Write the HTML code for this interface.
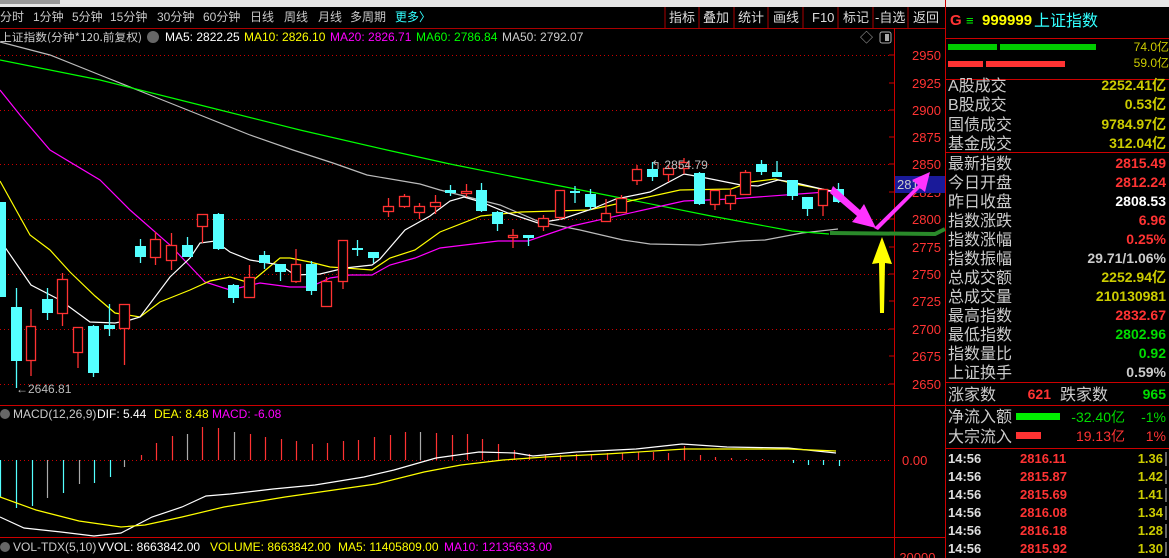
<!DOCTYPE html>
<html><head><meta charset="utf-8"><style>
html,body{margin:0;padding:0;background:#000;width:1169px;height:558px;overflow:hidden}
svg{display:block}
text{font-family:"Liberation Sans","Noto Sans CJK SC",sans-serif}
.cn{font-family:"Noto Sans CJK SC","WenQuanYi Zen Hei",sans-serif}
</style></head><body>
<svg id="s" width="1169" height="558" viewBox="0 0 1169 558" xmlns="http://www.w3.org/2000/svg">
<rect x="0" y="0" width="1169" height="7" fill="#e6e6e6"/>
<rect x="0" y="0" width="60" height="4" fill="#999"/>
<!-- menu -->
<g font-size="12" fill="#c8c8c8" class="cn">
<text x="0" y="21">分时</text><text x="33" y="21">1分钟</text><text x="72" y="21">5分钟</text><text x="110" y="21">15分钟</text><text x="157" y="21">30分钟</text><text x="203" y="21">60分钟</text><text x="250" y="21">日线</text><text x="284" y="21">周线</text><text x="318" y="21">月线</text><text x="350" y="21">多周期</text><text x="395" y="21" fill="#3ff">更多〉</text>
</g>
<line x1="0" y1="28.5" x2="945" y2="28.5" stroke="#a00" stroke-width="1"/>
<g stroke="#a00"><line x1="665" y1="7" x2="665" y2="28"/><line x1="699" y1="7" x2="699" y2="28"/><line x1="734" y1="7" x2="734" y2="28"/><line x1="768" y1="7" x2="768" y2="28"/><line x1="803" y1="7" x2="803" y2="28"/><line x1="838" y1="7" x2="838" y2="28"/><line x1="873" y1="7" x2="873" y2="28"/><line x1="908" y1="7" x2="908" y2="28"/></g>
<g font-size="13" fill="#ddd" class="cn">
<text x="669" y="22">指标</text><text x="703" y="22">叠加</text><text x="738" y="22">统计</text><text x="773" y="22">画线</text><text x="812" y="22" font-family="Liberation Sans">F10</text><text x="843" y="22">标记</text><text x="875" y="22">-自选</text><text x="913" y="22">返回</text>
</g>
<!-- header row -->
<g font-size="12">
<text x="0" y="41" fill="#ccc" class="cn" font-size="11" textLength="142" lengthAdjust="spacingAndGlyphs">上证指数(分钟*120.前复权)</text>
<circle cx="153" cy="37" r="6" fill="#666"/>
<text x="165" y="41" fill="#fff">MA5: 2822.25</text>
<text x="244" y="41" fill="#ff0">MA10: 2826.10</text>
<text x="330" y="41" fill="#f0f">MA20: 2826.71</text>
<text x="416" y="41" fill="#0f0">MA60: 2786.84</text>
<text x="502" y="41" fill="#ccc">MA50: 2792.07</text>
</g>
<text x="860" y="42" font-size="13" fill="#aaa">◇</text>
<rect x="880" y="32" width="11" height="11" rx="2" fill="none" stroke="#aaa"/><rect x="885" y="34" width="4" height="7" fill="#aaa"/>
<!-- grid -->
<g stroke="#c00" stroke-dasharray="1,3" stroke-width="1">
<line x1="0" y1="55.5" x2="890" y2="55.5"/><line x1="0" y1="110.5" x2="890" y2="110.5"/><line x1="0" y1="164.5" x2="890" y2="164.5"/><line x1="0" y1="219.5" x2="890" y2="219.5"/><line x1="0" y1="274.5" x2="890" y2="274.5"/><line x1="0" y1="329.5" x2="890" y2="329.5"/><line x1="0" y1="384.5" x2="890" y2="384.5"/>
<line x1="0" y1="460.5" x2="890" y2="460.5"/>
</g>
<line x1="894.5" y1="28" x2="894.5" y2="558" stroke="#c00"/>
<line x1="0" y1="405.5" x2="945" y2="405.5" stroke="#c00"/>
<line x1="0" y1="537.5" x2="945" y2="537.5" stroke="#c00"/>
<line x1="945.5" y1="0" x2="945.5" y2="558" stroke="#c00"/>
<g font-size="13" fill="#f33">
<text x="912" y="60">2950</text><text x="912" y="88">2925</text><text x="912" y="115">2900</text><text x="912" y="142">2875</text><text x="912" y="169">2850</text><text x="912" y="224">2800</text><text x="912" y="252">2775</text><text x="912" y="279">2750</text><text x="912" y="306">2725</text><text x="912" y="334">2700</text><text x="912" y="361">2675</text><text x="912" y="389">2650</text>
<text x="912" y="197">2825</text>
<text x="902" y="465">0.00</text>
<text x="895" y="562">-20000</text>
</g>
<g stroke="#c00"><line x1="889" y1="55" x2="894" y2="55"/><line x1="889" y1="83" x2="894" y2="83"/><line x1="889" y1="110" x2="894" y2="110"/><line x1="889" y1="137" x2="894" y2="137"/><line x1="889" y1="164" x2="894" y2="164"/><line x1="889" y1="192" x2="894" y2="192"/><line x1="889" y1="219" x2="894" y2="219"/><line x1="889" y1="247" x2="894" y2="247"/><line x1="889" y1="274" x2="894" y2="274"/><line x1="889" y1="301" x2="894" y2="301"/><line x1="889" y1="329" x2="894" y2="329"/><line x1="889" y1="356" x2="894" y2="356"/><line x1="889" y1="384" x2="894" y2="384"/></g>
<rect x="895" y="176" width="50" height="17" fill="#1a1a99"/>
<text x="897" y="189" font-size="13" fill="#ccc">2815</text>

<!-- MA lines -->
<g fill="none" stroke-width="1.2">
<polyline stroke="#bbb" points="0,42 50,55 100,75 150,95 200,115 250,135 293,150 333,163 367,175 420,184 440,190 500,205 540,222 580,230 623,240 650,244 700,245 741,241 765,240 802,233 838,229"/>
<polyline stroke="#0f0" points="0,60 100,80 200,105 300,130 387,150 450,164 520,178 616,197 711,216 792,231 829,234"/>
<polyline stroke="#f0f" points="0,90 20,115 50,150 100,180 130,210 170,245 187,263 205,282 230,290 260,283 290,287 310,287 330,278 350,275 372,275 390,265 415,258 440,248 498,241 528,241 572,226 657,207 684,201 731,199 758,197 826,192 836,190"/>
<polyline stroke="#ff0" points="0,181 30,235 50,250 70,272 95,296 115,313 140,317 160,302 175,296 190,290 210,281 230,277 250,283 280,258 290,258 310,262 330,267 345,268 372,270 390,258 415,250 440,232 481,216 521,212 589,210 680,190 731,189 751,182 775,179 795,184 832,191"/>
<polyline stroke="#fff" points="0,240 31,285 60,300 90,322 115,323 130,320 140,317 170,277 190,258 200,243 215,241 230,252 250,260 280,265 295,275 320,274 345,268 372,265 380,259 405,230 430,216 450,201 464,197 481,202 508,213 538,223 562,219 592,209 616,199 650,192 684,174 701,177 741,185 758,186 778,180 792,182 826,190 836,192"/>
</g>
<g id="candles"></g>
<text x="16" y="393" font-size="12" fill="#bbb">←2646.81</text>
<text x="651" y="169" font-size="12" fill="#bbb">↰ 2854.79</text>

<!-- arrows -->
<path d="M830,233 L935,234 L945,229" stroke="#2a8a2a" stroke-width="4" fill="none"/>
<polygon points="833,186 860,210 864,204 876,228 852,222 857,216 830,193" fill="#f3f"/>
<polygon points="874,228 918,185 912,180 930,172 925,192 920,188 878,230" fill="#f3f"/>
<polygon points="882,237 892,264 885,263 884,313 880,313 879,263 872,264" fill="#ff0"/>

<!-- MACD -->
<g font-size="12">
<circle cx="5" cy="414" r="5" fill="#666"/>
<text x="13" y="418" fill="#ccc">MACD(12,26,9)</text>
<text x="97" y="418" fill="#fff">DIF: 5.44</text>
<text x="154" y="418" fill="#ff0">DEA: 8.48</text>
<text x="212" y="418" fill="#f0f">MACD: -6.08</text>
<circle cx="5" cy="547" r="5" fill="#666"/>
<text x="13" y="551" fill="#ccc">VOL-TDX(5,10)</text>
<text x="98" y="551" fill="#fff">VVOL: 8663842.00</text>
<text x="210" y="551" fill="#ff0">VOLUME: 8663842.00</text>
<text x="338" y="551" fill="#ff0">MA5: 11405809.00</text>
<text x="444" y="551" fill="#f0f">MA10: 12135633.00</text>
</g>
<g id="macd"></g>
<g fill="none" stroke-width="1.2">
<polyline stroke="#fff" points="0,517 24,528 61,532 94,536 121,533 152,517 182,507 206,496 230,494 273,489 315,485 364,477 394,470 436,458 479,452 515,453 533,456 576,452 636,449 682,444 727,447 788,448 836,453"/>
<polyline stroke="#ff0" points="0,497 36,510 79,521 121,527 145,525 182,517 224,507 285,497 327,491 376,484 424,472 461,465 503,460 545,457 606,454 685,449 788,449 836,451"/>
</g>

<!-- right panel -->
<g font-size="15">
<text x="950" y="25" fill="#f33" font-weight="bold">G</text>
<text x="966" y="25" fill="#0f0" font-size="13">≡</text>
<text x="982" y="25" fill="#ff0" font-weight="bold">999999</text>
<text x="1034" y="26" fill="#3ff" class="cn" font-size="16">上证指数</text>
</g>
<line x1="946" y1="38.5" x2="1169" y2="38.5" stroke="#c00"/>
<rect x="948" y="44" width="49" height="6" fill="#0c0"/><rect x="1000" y="44" width="96" height="6" fill="#0c0"/>
<rect x="948" y="61" width="35" height="6" fill="#f33"/><rect x="986" y="61" width="79" height="6" fill="#f33"/>
<g font-size="12" fill="#cc0" text-anchor="end"><text x="1169" y="51">74.0亿</text><text x="1169" y="67">59.0亿</text></g>
<line x1="946" y1="79.5" x2="1169" y2="79.5" stroke="#c00"/>
<g font-size="16" fill="#ccc" class="cn">
<text x="948" y="91">A股成交</text><text x="948" y="110">B股成交</text><text x="948" y="130">国债成交</text><text x="948" y="149">基金成交</text>
</g>
<g font-size="14" fill="#cc0" text-anchor="end" font-weight="bold">
<text x="1166" y="90">2252.41亿</text><text x="1166" y="109">0.53亿</text><text x="1166" y="129">9784.97亿</text><text x="1166" y="148">312.04亿</text>
</g>
<line x1="946" y1="152.5" x2="1169" y2="152.5" stroke="#c00"/>
<g font-size="16" fill="#ccc" class="cn">
<text x="948" y="169">最新指数</text><text x="948" y="188">今日开盘</text><text x="948" y="207">昨日收盘</text><text x="948" y="226">指数涨跌</text><text x="948" y="245">指数涨幅</text><text x="948" y="264">指数振幅</text><text x="948" y="283">总成交额</text><text x="948" y="302">总成交量</text><text x="948" y="321">最高指数</text><text x="948" y="340">最低指数</text><text x="948" y="359">指数量比</text><text x="948" y="378">上证换手</text>
</g>
<g font-size="14" text-anchor="end" font-weight="bold">
<text x="1166" y="168" fill="#f33">2815.49</text><text x="1166" y="187" fill="#f33">2812.24</text><text x="1166" y="206" fill="#fff">2808.53</text><text x="1166" y="225" fill="#f33">6.96</text><text x="1166" y="244" fill="#f33">0.25%</text><text x="1166" y="263" fill="#ccc">29.71/1.06%</text><text x="1166" y="282" fill="#cc0">2252.94亿</text><text x="1166" y="301" fill="#cc0">210130981</text><text x="1166" y="320" fill="#f33">2832.67</text><text x="1166" y="339" fill="#0d0">2802.96</text><text x="1166" y="358" fill="#0d0">0.92</text><text x="1166" y="377" fill="#ccc">0.59%</text>
</g>
<line x1="946" y1="382.5" x2="1169" y2="382.5" stroke="#c00"/>
<g font-size="16" fill="#ccc" class="cn"><text x="948" y="400">涨家数</text><text x="1060" y="400">跌家数</text></g>
<g font-size="14" font-weight="bold" text-anchor="end"><text x="1051" y="399" fill="#f33">621</text><text x="1166" y="399" fill="#0d0">965</text></g>
<line x1="946" y1="405.5" x2="1169" y2="405.5" stroke="#c00"/>
<g font-size="16" fill="#ccc" class="cn"><text x="948" y="422">净流入额</text><text x="948" y="442">大宗流入</text></g>
<rect x="1016" y="413" width="44" height="7" fill="#0e0"/><rect x="1016" y="432" width="25" height="7" fill="#f33"/>
<g font-size="14" text-anchor="end"><text x="1125" y="422" fill="#0d0">-32.40亿</text><text x="1166" y="422" fill="#0d0">-1%</text><text x="1125" y="441" fill="#f33">19.13亿</text><text x="1166" y="441" fill="#f33">1%</text></g>
<line x1="946" y1="448.5" x2="1169" y2="448.5" stroke="#c00"/>
<g font-size="13" font-weight="bold">
<g fill="#ddd"><text x="948" y="463">14:56</text><text x="948" y="481">14:56</text><text x="948" y="499">14:56</text><text x="948" y="517">14:56</text><text x="948" y="535">14:56</text><text x="948" y="553">14:56</text></g>
<g fill="#f33"><text x="1020" y="463">2816.11</text><text x="1020" y="481">2815.87</text><text x="1020" y="499">2815.69</text><text x="1020" y="517">2816.08</text><text x="1020" y="535">2816.18</text><text x="1020" y="553">2815.92</text></g>
<g fill="#cc0" text-anchor="end"><text x="1163" y="463">1.36</text><text x="1163" y="481">1.42</text><text x="1163" y="499">1.41</text><text x="1163" y="517">1.34</text><text x="1163" y="535">1.28</text><text x="1163" y="553">1.30</text></g>
</g>
<g stroke="#ccc"><line x1="1166" y1="452" x2="1166" y2="466"/><line x1="1166" y1="470" x2="1166" y2="484"/><line x1="1166" y1="488" x2="1166" y2="502"/><line x1="1166" y1="506" x2="1166" y2="520"/><line x1="1166" y1="524" x2="1166" y2="538"/><line x1="1166" y1="542" x2="1166" y2="556"/></g>
</svg>
<script>
var C=[[0,6,202,297,202,297,'c'],[11,22,307,361,288,388,'c'],[26,36,326,361,309,376,'r'],[42,53,299,313,288,320,'c'],[57,68,279,314,273,326,'r'],[73,83,327,353,327,368,'r'],[88,99,326,373,325,377,'c'],[104,115,325,329,304,336,'c'],[119,130,304,329,304,365,'r'],[135,146,246,257,239,263,'c'],[150,161,239,258,232,265,'r'],[166,177,245,261,233,270,'r'],[182,193,245,257,237,257,'c'],[197,208,214,227,214,243,'r'],[213,224,214,249,213,250,'c'],[228,239,285,298,284,303,'c'],[244,255,277,298,265,298,'r'],[259,270,255,263,251,269,'c'],[275,286,264,272,264,281,'c'],[291,301,264,282,249,283,'r'],[306,317,264,291,261,295,'c'],[321,332,281,307,277,307,'r'],[338,348,240,282,240,289,'r'],[352,363,248,250,240,256,'c'],[368,379,252,258,252,263,'c'],[383,394,206,212,198,217,'r'],[399,410,196,207,194,208,'r'],[414,425,206,213,203,219,'r'],[430,441,202,207,195,214,'r'],[445,456,190,193,185,196,'c'],[461,472,191,194,184,197,'r'],[476,487,190,211,183,212,'c'],[492,503,212,224,211,231,'c'],[508,518,235,238,229,248,'r'],[523,534,235,238,235,246,'c'],[538,549,218,227,215,231,'r'],[555,565,190,218,190,220,'r'],[570,580,191,193,186,203,'c'],[585,596,194,207,189,210,'c'],[601,611,213,222,199,222,'r'],[616,627,198,213,195,213,'r'],[632,642,169,181,165,185,'r'],[647,658,169,177,162,181,'c'],[663,674,168,175,164,182,'r'],[679,689,162,169,158,174,'r'],[694,705,173,204,172,205,'c'],[710,720,190,205,190,210,'r'],[725,736,195,204,189,210,'r'],[740,751,172,195,170,195,'r'],[756,767,164,172,160,175,'c'],[772,782,172,177,161,177,'c'],[787,798,180,196,180,200,'c'],[802,813,197,209,197,216,'c'],[818,828,189,206,189,216,'r'],[833,844,189,202,183,203,'c']];
var h='';
C.forEach(function(c){var m=(c[0]+c[1])/2,col=c[6]=='c'?'#54ffff':'#ff3232';
h+='<line x1="'+(m)+'" y1="'+c[4]+'" x2="'+m+'" y2="'+c[5]+'" stroke="'+col+'" stroke-width="1.3"/>';
var bh=Math.max(c[3]-c[2],2);
if(c[6]=='c')h+='<rect x="'+c[0]+'" y="'+c[2]+'" width="'+(c[1]-c[0])+'" height="'+bh+'" fill="'+col+'"/>';
else h+='<rect x="'+(c[0]+0.5)+'" y="'+(c[2]+0.5)+'" width="'+(c[1]-c[0]-1)+'" height="'+(bh-1)+'" fill="#000" stroke="'+col+'" stroke-width="1.3"/>';});
document.getElementById('candles').innerHTML=h;
var B=[[0,497,'c'],[16,508,'c'],[32,506,'c'],[47,498,'g'],[63,493,'c'],[79,484,'g'],[94,483,'c'],[110,477,'c'],[124,467,'g'],[141,455,'r'],[156,443,'r'],[172,436,'r'],[187,434,'g'],[202,427,'r'],[218,428,'r'],[234,432,'g'],[250,434,'r'],[265,437,'r'],[281,439,'r'],[296,441,'r'],[312,444,'r'],[327,443,'r'],[343,441,'r'],[358,440,'r'],[374,437,'r'],[390,435,'r'],[405,432,'r'],[420,432,'g'],[436,433,'r'],[452,435,'r'],[467,434,'r'],[482,439,'r'],[498,444,'r'],[514,450,'r'],[529,454,'r'],[545,455,'r'],[560,455,'r'],[576,454,'r'],[591,454,'r'],[607,453,'r'],[622,453,'r'],[638,452,'r'],[653,452,'r'],[668,453,'r'],[684,446,'r'],[700,455,'r'],[715,457,'r'],[731,458,'r'],[746,459,'r'],[762,459,'r'],[793,463,'c'],[808,465,'c'],[823,465,'c'],[839,466,'c']];
var g='';B.forEach(function(b){var col=b[2]=='c'?'#54ffff':(b[2]=='g'?'#aaa':'#ff3232');
g+='<line x1="'+(b[0]+0.5)+'" y1="460" x2="'+(b[0]+0.5)+'" y2="'+b[1]+'" stroke="'+col+'" stroke-width="1.2"/>';});
document.getElementById('macd').innerHTML=g;
</script>
</body></html>
